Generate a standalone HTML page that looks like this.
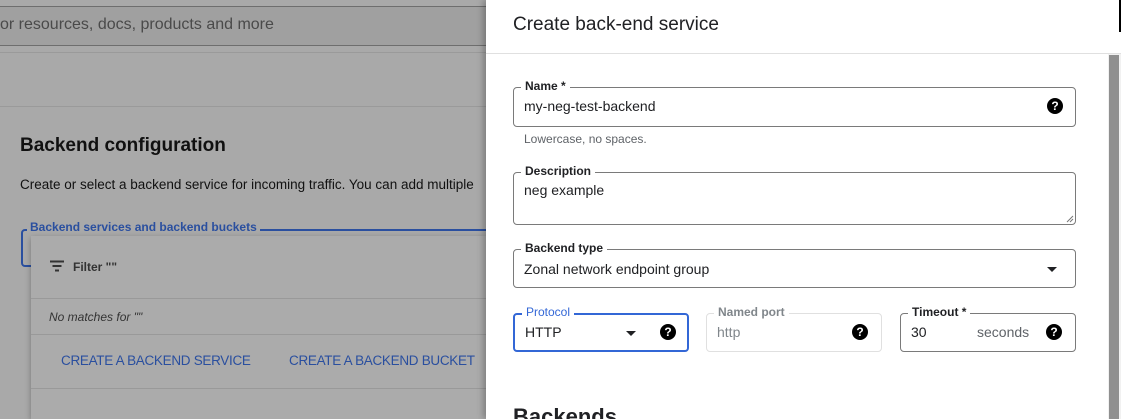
<!DOCTYPE html>
<html style="width:1121px;height:419px;overflow:hidden"><head><meta charset="utf-8"><style>
*{box-sizing:border-box;margin:0;padding:0}
body{width:1121px;height:419px;overflow:hidden;position:relative;font-family:"Liberation Sans",Roboto,sans-serif;background:#a9a9a9}
.a{position:absolute;white-space:nowrap}
.f{position:absolute;border:1px solid #7a7a7a;border-radius:4px}
.lb{position:absolute;top:-9px;left:7px;background:#fff;padding:0 4px;font-size:12px;font-weight:bold;color:#202124;line-height:15px}
.v{position:absolute;left:10px;font-size:14px;color:#202124}
.q{position:absolute;width:16px;height:16px;border-radius:50%;background:#000;color:#fff;font-size:12px;font-weight:bold;text-align:center;line-height:16px}
.tri{position:absolute;width:0;height:0;border-left:5px solid transparent;border-right:5px solid transparent;border-top:5px solid #202124}
</style></head><body>
<div class="a" style="left:0;top:6px;width:486px;height:40px;background:#a0a0a0;border-top:1px solid #6e6e6e;border-bottom:1px solid #6e6e6e"></div>
<div class="a" style="left:0;top:16px;font-size:16px;color:#4a4a4a">or resources, docs, products and more</div>
<div class="a" style="left:0;top:52px;width:486px;height:1px;background:#9a9a9a"></div>
<div class="a" style="left:0;top:106px;width:486px;height:1px;background:#9a9a9a"></div>
<div class="a" style="left:20px;top:135px;font-size:19px;font-weight:bold;color:#111">Backend configuration</div>
<div class="a" style="left:20px;top:177px;font-size:13.5px;color:#111;width:466px;overflow:hidden">Create or select a backend service for incoming traffic. You can add multiple</div>
<div class="a" style="left:21px;top:229px;width:480px;height:38px;border:2px solid #2a4f9f;border-radius:4px"></div>
<div class="a" style="left:27px;top:220px;background:#a9a9a9;padding:0 3px;font-size:12px;font-weight:bold;color:#2a4f9f">Backend services and backend buckets</div>
<div class="a" style="left:31px;top:236px;width:455px;height:183px;background:#ababab;box-shadow:0 2px 6px rgba(0,0,0,.3)"></div>
<svg class="a" style="left:49px;top:260px" width="16" height="12"><path d="M1 1.5h14M3.5 6h9M6 10.5h4" stroke="#333" stroke-width="2"/></svg>
<div class="a" style="left:73px;top:260px;font-size:12px;font-weight:bold;color:#333">Filter ""</div>
<div class="a" style="left:31px;top:298px;width:455px;height:1px;background:#999"></div>
<div class="a" style="left:49px;top:310px;font-size:12px;font-style:italic;color:#333">No matches for ""</div>
<div class="a" style="left:31px;top:334px;width:455px;height:1px;background:#999"></div>
<div class="a" style="left:61px;top:353px;font-size:13.5px;letter-spacing:-0.3px;color:#2a4f9f">CREATE A BACKEND SERVICE</div>
<div class="a" style="left:289px;top:353px;font-size:13.5px;letter-spacing:-0.3px;color:#2a4f9f">CREATE A BACKEND BUCKET</div>
<div class="a" style="left:31px;top:388px;width:455px;height:1px;background:#999"></div>
<div class="a" style="left:486px;top:0;width:635px;height:419px;background:#fff;box-shadow:-3px 0 6px rgba(0,0,0,.25)"></div>
<div class="a" style="left:1119px;top:0;width:2px;height:32px;background:#000"></div>
<div class="a" style="left:513px;top:14px;font-size:19px;color:#202124">Create back-end service</div>
<div class="a" style="left:486px;top:53px;width:635px;height:1px;background:#e0e0e0"></div>
<div class="a" style="left:1108px;top:54px;width:13px;height:365px;background:#f1f1f1"></div>
<div class="a" style="left:1109px;top:55px;width:10px;height:364px;background:#8f8f8f"></div>

<div class="f" style="left:513px;top:87px;width:563px;height:40px"><span class="lb">Name *</span><span class="v" style="top:10px">my-neg-test-backend</span><span class="q" style="right:12px;top:10px">?</span></div>
<div class="a" style="left:524px;top:132px;font-size:12px;color:#5f6368">Lowercase, no spaces.</div>
<div class="f" style="left:513px;top:172px;width:563px;height:53px"><span class="lb">Description</span><span class="v" style="top:9px">neg example</span>
<svg class="a" style="right:1px;bottom:1px" width="8" height="8"><path d="M7 1L1 7M7 4L4 7" stroke="#777" stroke-width="1"/></svg></div>
<div class="f" style="left:513px;top:249px;width:563px;height:39px"><span class="lb">Backend type</span><span class="v" style="top:11px">Zonal network endpoint group</span><span class="tri" style="right:18px;top:17px"></span></div>
<div class="f" style="left:513px;top:313px;width:176px;height:39px;border:2px solid #3367d6"><span class="lb" style="top:-10px;color:#3367d6;font-weight:normal">Protocol</span><span class="v" style="top:9px">HTTP</span><span class="tri" style="left:111px;top:16px"></span><span class="q" style="left:145px;top:9px">?</span></div>
<div class="f" style="left:706px;top:313px;width:176px;height:39px;border-color:#e0e0e0"><span class="lb" style="color:#80868b">Named port</span><span class="v" style="top:10px;color:#80868b">http</span><span class="q" style="left:145px;top:10px">?</span></div>
<div class="f" style="left:900px;top:313px;width:176px;height:39px"><span class="lb">Timeout *</span><span class="v" style="top:10px">30</span><span class="v" style="left:76px;top:10px;color:#5f6368">seconds</span><span class="q" style="left:145px;top:10px">?</span></div>
<div class="a" style="left:513px;top:404px;font-size:22px;font-weight:bold;color:#202124">Backends</div>
</body></html>
